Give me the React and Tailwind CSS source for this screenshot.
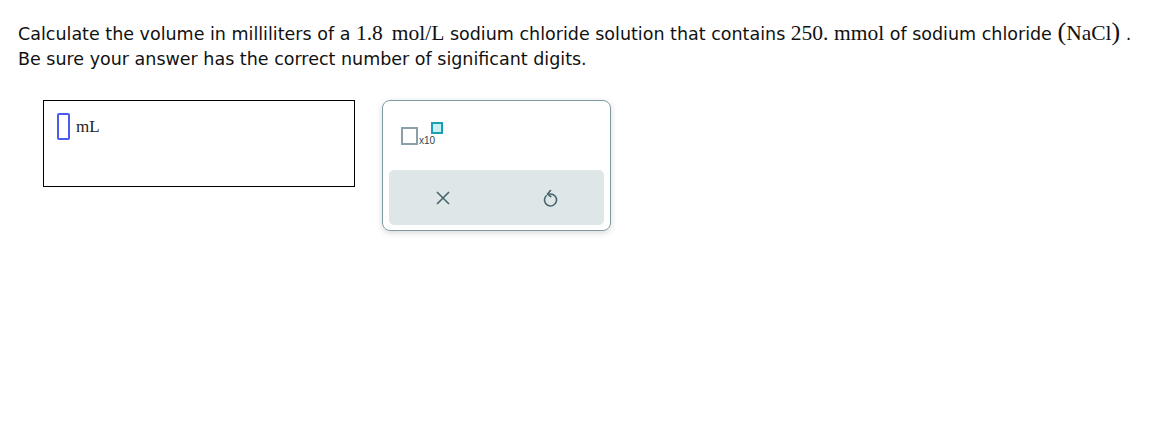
import React from 'react'

const M = ({ children, className = '' }) => (
  <span className={`font-['Liberation_Serif',serif] text-[21.5px] ${className}`}>{children}</span>
)

const App = () => {
  return (
    <div className="w-[1164px] h-[438px] bg-white font-['DejaVu_Sans',Verdana,sans-serif] text-[17.5px] text-[#111]">
      <div className="pl-[18px] pt-[19px] leading-[25px]">
        <p className="whitespace-nowrap">
          Calculate the volume in milliliters of a <M>1.8</M>
          <M className="ml-[9px]">mol/L</M> sodium chloride solution that contains <M>250.</M>{' '}
          <M>mmol</M> of sodium chloride{' '}
          <M className="text-[21.5px]">
            <span className="text-[26px]">(</span>NaCl<span className="text-[26px]">)</span>
          </M>{' '}
          .
        </p>
        <p>Be sure your answer has the correct number of significant digits.</p>
      </div>

      <div className="flex items-start gap-[27px] pl-[43px] pt-[28px]">
        <div className="w-[312px] h-[87px] border border-black px-[13px] pt-[12px] flex items-start gap-[6px]">
          <div className="w-[13px] h-[27px] border-2 border-[#4a5bf0] rounded-[2px]" />
          <span className="font-['Liberation_Serif',serif] text-[17px] leading-[27px] text-[#222]">mL</span>
        </div>

        <div className="w-[229px] h-[131px] border border-[#7f9ba2] rounded-[8px] shadow-[0_2px_6px_rgba(0,0,0,0.15)] px-[6px] pt-[21px] flex flex-col">
          <div className="relative h-[27px] ml-[12px]">
            <div className="absolute left-0 top-[5px] w-[17px] h-[18px] border-2 border-[#89a1a7]" />
            <span className="absolute left-[18px] top-[14px] font-['Liberation_Sans',sans-serif] text-[10px] leading-none text-[#2f4a52]">x10</span>
            <div className="absolute left-[30px] top-0 w-[12px] h-[12px] border-2 border-[#1a9fb3] bg-[#c9eef3]" />
          </div>
          <div className="mt-[21px] h-[55px] bg-[#dfe6e8] rounded-[5px] flex items-center">
            <div className="flex-1 flex justify-center">
              <svg width="14" height="14" viewBox="0 0 14 14">
                <path d="M1 1 L13 13 M13 1 L1 13" stroke="#47656d" strokeWidth="1.6" fill="none" />
              </svg>
            </div>
            <div className="flex-1 flex justify-center">
              <svg width="16" height="18" viewBox="0 0 16 18">
                <path d="M4.2 6.8 A6 6 0 1 0 8 5 L7 5" stroke="#47656d" strokeWidth="1.6" fill="none" strokeLinecap="round" />
                <path d="M8.5 1.5 L5.5 5 L8.8 7.6" stroke="#47656d" strokeWidth="1.6" fill="none" strokeLinecap="round" strokeLinejoin="round" />
              </svg>
            </div>
          </div>
        </div>
      </div>
    </div>
  )
}

export default App
